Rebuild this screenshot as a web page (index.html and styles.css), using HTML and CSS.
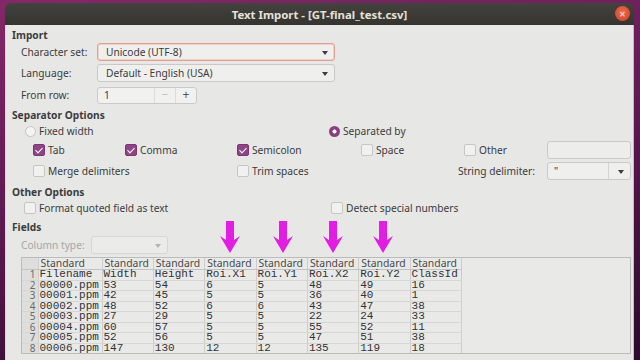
FILE: index.html
```html
<!DOCTYPE html>
<html lang="en">
<head>
    <meta charset="UTF-8">
    <title>Text Import</title>
    <link rel="stylesheet" href="styles.css">
</head>
<body>
    <div class="window">
        <div class="titlebar">
            <span class="title">Text Import - [GT-final_test.csv]</span>
            <span class="close">&#x2715;</span>
        </div>
        <div class="content">
            <div class="heading">Import</div>
            <div class="form-row row-charset">
                <span class="form-label">Character set:</span>
                <div class="combo focus">Unicode (UTF-8)<span class="arrow"></span></div>
            </div>
            <div class="form-row row-lang">
                <span class="form-label">Language:</span>
                <div class="combo">Default - English (USA)<span class="arrow"></span></div>
            </div>
            <div class="form-row row-from">
                <span class="form-label">From row:</span>
                <div class="spin">
                    <span class="spin-entry">1</span>
                    <span class="spin-btn disabled">&minus;</span>
                    <span class="spin-btn">+</span>
                </div>
            </div>

            <div class="heading heading-sep">Separator Options</div>
            <div class="radio-row">
                <label class="opt opt-fixed"><span class="radio"></span>Fixed width</label>
                <label class="opt"><span class="radio on"></span>Separated by</label>
            </div>
            <div class="sep-grid">
                <label class="opt"><span class="check on"></span>Tab</label>
                <label class="opt"><span class="check on"></span>Comma</label>
                <label class="opt"><span class="check on"></span>Semicolon</label>
                <label class="opt"><span class="check"></span>Space</label>
                <label class="opt"><span class="check"></span>Other</label>
                <div class="entry"></div>

                <label class="opt span2"><span class="check"></span>Merge delimiters</label>
                <label class="opt"><span class="check"></span>Trim spaces</label>
                <span class="delim-label">String delimiter:</span>
                <div class="combo-entry"><span class="combo-text">"</span><span class="combo-btn"><span class="arrow"></span></span></div>
            </div>

            <div class="heading heading-other">Other Options</div>
            <div class="radio-row format-row">
                <label class="opt opt-quoted"><span class="check"></span>Format quoted field as text</label>
                <label class="opt"><span class="check"></span>Detect special numbers</label>
            </div>

            <div class="heading heading-fields">Fields</div>
            <div class="form-row row-coltype">
                <span class="form-label muted">Column type:</span>
                <div class="combo disabled"><span class="arrow"></span></div>
            </div>

            <div class="grid-box">
                <table class="data">
                    <colgroup>
                        <col class="c-num">
                        <col class="c-first">
                        <col><col><col><col><col><col><col>
                    </colgroup>
                    <thead>
                        <tr>
                            <th class="num"></th>
                            <th>Standard</th><th>Standard</th><th>Standard</th><th>Standard</th>
                            <th>Standard</th><th>Standard</th><th>Standard</th><th>Standard</th>
                        </tr>
                    </thead>
                    <tbody id="rows"></tbody>
                </table>
            </div>
        </div>

        <svg class="arrows" width="640" height="60" viewBox="0 0 640 60">
            <polygon points="226,0 234,0 234,19 240,15 230,32 220,15 226,19"/>
            <polygon points="279,0 287,0 287,19 293,15 283,32 273,15 279,19"/>
            <polygon points="329,0 337,0 337,19 343,15 333,32 323,15 329,19"/>
            <polygon points="379,0 387,0 387,19 393,15 383,32 373,15 379,19"/>
        </svg>
    </div>

    <script>
        const data = [
            ["Filename", "Width", "Height", "Roi.X1", "Roi.Y1", "Roi.X2", "Roi.Y2", "ClassId"],
            ["00000.ppm", "53", "54", "6", "5", "48", "49", "16"],
            ["00001.ppm", "42", "45", "5", "5", "36", "40", "1"],
            ["00002.ppm", "48", "52", "6", "6", "43", "47", "38"],
            ["00003.ppm", "27", "29", "5", "5", "22", "24", "33"],
            ["00004.ppm", "60", "57", "5", "5", "55", "52", "11"],
            ["00005.ppm", "52", "56", "5", "5", "47", "51", "38"],
            ["00006.ppm", "147", "130", "12", "12", "135", "119", "18"]
        ];

        const body = document.getElementById("rows");
        data.forEach((cells, i) => {
            const row = document.createElement("tr");
            row.innerHTML = `<td class="num">${i + 1}</td>` + cells.map(c => `<td>${c}</td>`).join('');
            body.appendChild(row);
        });
    </script>
</body>
</html>
```

FILE: styles.css
```css
body {
    margin: 0;
    height: 360px;
    overflow: hidden;
    font-family: 'Noto Sans', sans-serif;
    font-size: 10.2px;
    color: #3c3c3c;
    background: linear-gradient(170deg, #84286a 0%, #5e1a52 45%, #2a0a2a 100%);
}

.window {
    position: relative;
    margin: 3px 0 0 5px;
    width: 629px;
}

.titlebar {
    height: 22px;
    display: flex;
    align-items: center;
    justify-content: center;
    background: linear-gradient(#43423e, #35342f);
    border-radius: 6px 6px 0 0;
    position: relative;
}

.title {
    color: #e4e1da;
    font-weight: bold;
    font-size: 11.4px;
}

.close {
    position: absolute;
    right: 4px;
    top: 3px;
    width: 15px;
    height: 15px;
    border-radius: 50%;
    background: radial-gradient(circle at 50% 40%, #f06a4a, #c9412b);
    color: #f6c9c0;
    font-size: 8px;
    font-weight: bold;
    display: flex;
    align-items: center;
    justify-content: center;
}

.content {
    background-color: #e7e7e6;
    border-left: 1px solid #d6d6d6;
    border-right: 1px solid #bdbdbd;
    padding: 2px 0 10px 6px;
    height: 340px;
    box-sizing: border-box;
}

.heading {
    font-weight: bold;
    height: 16px;
    line-height: 16px;
}

.heading-sep,
.heading-other,
.heading-fields {
    margin-top: 3px;
}

.form-row {
    display: flex;
    align-items: center;
    height: 18px;
    padding-left: 9px;
}

.row-lang {
    margin-top: 3px;
}

.row-from {
    margin-top: 4px;
}

.row-coltype {
    margin-top: 1px;
}

.form-label {
    width: 76px;
}

.muted {
    color: #a6a6a6;
    width: 70px;
}

.combo {
    position: relative;
    width: 238px;
    height: 18px;
    box-sizing: border-box;
    border: 1px solid #c9c9c7;
    border-radius: 3px;
    background-color: #efefee;
    padding-left: 8px;
    line-height: 16px;
}

.combo.focus {
    border-color: #e4a092;
    box-shadow: inset 0 0 0 1px #f0cfc7;
}

.combo.disabled {
    width: 77px;
    background-color: #ebebea;
    border-color: #d6d6d4;
}

.arrow {
    position: absolute;
    right: 6px;
    top: 7px;
    width: 0;
    height: 0;
    border-left: 3.5px solid transparent;
    border-right: 3.5px solid transparent;
    border-top: 4px solid #3c3c3c;
}

.combo.disabled .arrow {
    border-top-color: #b4b4b4;
}

.spin {
    display: flex;
    height: 17px;
    margin-top: 1px;
    border: 1px solid #cacac8;
    border-radius: 3px;
    background-color: #f1f1f0;
    box-sizing: border-box;
}

.spin-entry {
    width: 56px;
    padding-left: 6px;
    line-height: 15px;
    box-sizing: border-box;
}

.spin-btn {
    width: 20px;
    text-align: center;
    line-height: 14px;
    font-size: 12px;
    border-left: 1px solid #dcdcda;
    color: #555;
}

.spin-btn.disabled {
    color: #c4c4c4;
}

.radio-row {
    display: flex;
    height: 16px;
    align-items: center;
    padding-left: 13px;
}

.opt {
    display: flex;
    align-items: center;
    white-space: nowrap;
}

.opt-fixed {
    width: 304px;
}

.format-row {
    padding-left: 12px;
}

.opt-quoted {
    width: 307px;
}

.radio {
    width: 11px;
    height: 11px;
    box-sizing: border-box;
    border: 1px solid #c3c3c1;
    border-radius: 50%;
    background-color: #f4f4f3;
    margin-right: 3px;
}

.radio.on {
    border: none;
    background: radial-gradient(circle, #fff 0 1.8px, #8b3f80 2.3px);
}

.check {
    width: 12px;
    height: 12px;
    box-sizing: border-box;
    border: 1px solid #c6c6c4;
    border-radius: 2px;
    background-color: #f1f1f0;
    margin-right: 3px;
    position: relative;
}

.check.on {
    border-color: #7e3574;
    background-color: #8e4585;
}

.check.on::after {
    content: "";
    position: absolute;
    left: 3px;
    top: 1px;
    width: 3px;
    height: 6px;
    border-right: 1.5px solid #fff;
    border-bottom: 1.5px solid #fff;
    transform: rotate(45deg);
}

.sep-grid {
    display: grid;
    grid-template-columns: 92px 112px 124px 103px 83px 84px;
    grid-auto-rows: 20px;
    row-gap: 1px;
    align-items: center;
    margin-top: 1px;
    padding-left: 21px;
}

.span2 {
    grid-column: span 2;
}

.delim-label {
    grid-column: span 2;
    text-align: right;
    padding-right: 12px;
}

.entry {
    height: 18px;
    border: 1px solid #c9c9c7;
    border-radius: 3px;
    background-color: #ededec;
    box-sizing: border-box;
}

.combo-entry {
    display: flex;
    height: 18px;
    border: 1px solid #c9c9c7;
    border-radius: 3px;
    background-color: #efefee;
    box-sizing: border-box;
}

.combo-text {
    flex: 1;
    padding-left: 6px;
    line-height: 16px;
}

.combo-btn {
    position: relative;
    width: 21px;
    border-left: 1px solid #d4d4d2;
}

.grid-box {
    margin: 3px 0 0 9px;
    width: 610px;
    height: 97px;
    box-sizing: border-box;
    border: 1px solid #bcbcbc;
    background-color: #e9e9e8;
    overflow: hidden;
}

.data {
    border-collapse: collapse;
    table-layout: fixed;
    width: 440px;
}

.c-num {
    width: 16px;
}

.c-first {
    width: 64px;
}

.data th,
.data td {
    padding: 0 0 0 1px;
    border-right: 1px solid #cdcdcc;
    border-bottom: 1px solid #d6d6d5;
    text-align: left;
    white-space: nowrap;
}

.data th {
    height: 11px;
    line-height: 11px;
    font-weight: normal;
    font-size: 10.4px;
    color: #4a4a4a;
    padding-left: 2px;
    border-bottom-color: #c2c2c2;
}

.data td {
    height: 9.5px;
    line-height: 9.5px;
    font-family: 'Liberation Mono', monospace;
    font-size: 11px;
    color: #333;
}

.data .num {
    background-color: #dededd;
    font-family: 'Noto Sans', sans-serif;
    font-size: 10px;
    color: #6a6a6a;
    text-align: right;
    padding: 0 2px 0 0;
}

.arrows {
    position: absolute;
    left: -5px;
    top: 218px;
    fill: #e11ee1;
}
```
